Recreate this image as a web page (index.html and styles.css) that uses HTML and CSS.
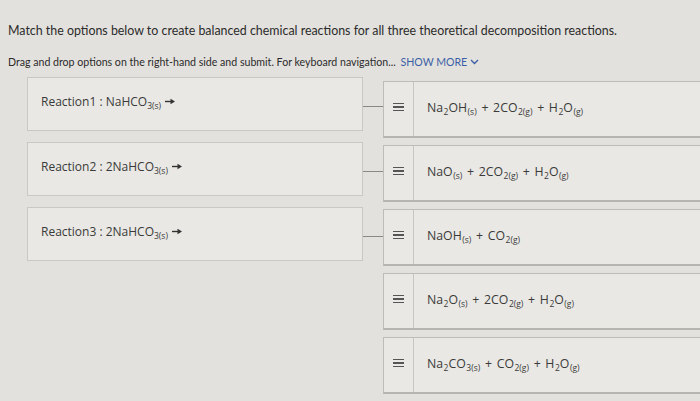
FILE: index.html
```html
<!DOCTYPE html>
<html>
<head>
<meta charset="utf-8">
<link rel="stylesheet" href="styles.css">
</head>
<body>
<div class="page">
  <p class="title">Match the options below to create balanced chemical reactions for all three theoretical decomposition reactions.</p>
  <p class="hint">Drag and drop options on the right-hand side and submit. For keyboard navigation... <span class="more">SHOW MORE <svg class="chev" width="9" height="6" viewBox="0 0 9 6"><path d="M1 1 L4.5 4.5 L8 1" fill="none" stroke="#3a5fa6" stroke-width="1.4"/></svg></span></p>
  <div class="board">
    <div class="premises">
      <div class="premise"><span class="txt">Reaction1 : NaHCO<sub>3(s)</sub> <svg class="arrow" width="10" height="7" viewBox="0 0 10 7"><path d="M0 3.5 H6.5" stroke="#333" stroke-width="1.4"/><path d="M5.5 0.8 L10 3.5 L5.5 6.2 Z" fill="#333"/></svg></span></div>
      <div class="premise"><span class="txt">Reaction2 : 2NaHCO<sub>3(s)</sub> <svg class="arrow" width="10" height="7" viewBox="0 0 10 7"><path d="M0 3.5 H6.5" stroke="#333" stroke-width="1.4"/><path d="M5.5 0.8 L10 3.5 L5.5 6.2 Z" fill="#333"/></svg></span></div>
      <div class="premise"><span class="txt">Reaction3 : 2NaHCO<sub>3(s)</sub> <svg class="arrow" width="10" height="7" viewBox="0 0 10 7"><path d="M0 3.5 H6.5" stroke="#333" stroke-width="1.4"/><path d="M5.5 0.8 L10 3.5 L5.5 6.2 Z" fill="#333"/></svg></span></div>
    </div>
    <div class="links">
      <div class="link"></div>
      <div class="link"></div>
      <div class="link"></div>
    </div>
    <div class="options">
      <div class="option"><span class="handle"><i></i><i></i><i></i></span><span class="formula"><span class="txt">Na<sub>2</sub>OH<sub>(s)</sub> + 2CO<sub>2(g)</sub> + H<sub>2</sub>O<sub>(g)</sub></span></span></div>
      <div class="option"><span class="handle"><i></i><i></i><i></i></span><span class="formula"><span class="txt">NaO<sub>(s)</sub> + 2CO<sub>2(g)</sub> + H<sub>2</sub>O<sub>(g)</sub></span></span></div>
      <div class="option"><span class="handle"><i></i><i></i><i></i></span><span class="formula"><span class="txt">NaOH<sub>(s)</sub> + CO<sub>2(g)</sub></span></span></div>
      <div class="option"><span class="handle"><i></i><i></i><i></i></span><span class="formula"><span class="txt">Na<sub>2</sub>O<sub>(s)</sub> + 2CO<sub>2(g)</sub> + H<sub>2</sub>O<sub>(g)</sub></span></span></div>
      <div class="option"><span class="handle"><i></i><i></i><i></i></span><span class="formula"><span class="txt">Na<sub>2</sub>CO<sub>3(s)</sub> + CO<sub>2(g)</sub> + H<sub>2</sub>O<sub>(g)</sub></span></span></div>
    </div>
  </div>
</div>
</body>
</html>
```
FILE: styles.css
```css
html, body {
  margin: 0;
  padding: 0;
  background: #e3e1dd;
}
body {
  width: 700px;
  height: 401px;
  overflow: hidden;
  font-family: "Open Sans", "Noto Sans", sans-serif;
  color: #333;
}
.page {
  padding: 23px 0 0 8px;
}
.title {
  margin: 0;
  font-family: Lato, sans-serif;
  font-size: 12.4px;
  line-height: 16px;
  color: #2b2b2b;
}
.hint {
  margin: 16px 0 0 0;
  font-family: Lato, sans-serif;
  font-size: 10.6px;
  line-height: 14px;
  color: #2b2b2b;
}
.more {
  color: #3a5fa6;
  margin-left: 2px;
}
.chev {
  vertical-align: 1px;
}
.board {
  display: flex;
  margin-top: 6px;
}
.premises {
  display: flex;
  flex-direction: column;
  gap: 11px;
  width: 336px;
  margin-left: 19px;
  padding-top: 2px;
}
.premise {
  height: 54px;
  box-sizing: border-box;
  border: 1px solid #cac8c4;
  background: #e9e8e4;
  display: flex;
  align-items: center;
  padding: 0 0 5px 13px;
  font-size: 12px;
  color: #3a3a3a;
}
.txt {
  white-space: pre;
}
.premise sub, .formula sub {
  font-size: 8.5px;
  vertical-align: -3px;
  line-height: 0;
}
.arrow {
  margin-left: 1px;
  vertical-align: 1px;
}
.links {
  width: 20px;
  display: flex;
  flex-direction: column;
  gap: 8px;
  padding-top: 6px;
}
.link {
  height: 57px;
  box-sizing: border-box;
  padding-top: 25px;
}
.link::before {
  content: "";
  display: block;
  width: 20px;
  height: 1px;
  background: #8a8884;
}
.options {
  flex: 1;
  display: flex;
  flex-direction: column;
  gap: 7px;
  padding-top: 6px;
}
.option {
  height: 57px;
  box-sizing: border-box;
  border: 1px solid #bebcb8;
  border-right: none;
  border-bottom: 2px solid #b6b4b0;
  background: #e9e8e4;
  display: flex;
  align-items: stretch;
}
.handle {
  width: 29px;
  border-right: 1px solid #c8c6c2;
  display: flex;
  flex-direction: column;
  justify-content: center;
  align-items: center;
  gap: 2px;
  padding-bottom: 4px;
}
.handle i {
  display: block;
  width: 11px;
  height: 1.5px;
  background: #555;
}
.formula {
  display: flex;
  align-items: center;
  padding: 0 0 4px 13px;
  font-size: 12.3px;
  word-spacing: 1.5px;
  color: #3a3a3a;
}
.formula sub {
  margin-left: 0.5px;
  word-spacing: 0;
}
```
